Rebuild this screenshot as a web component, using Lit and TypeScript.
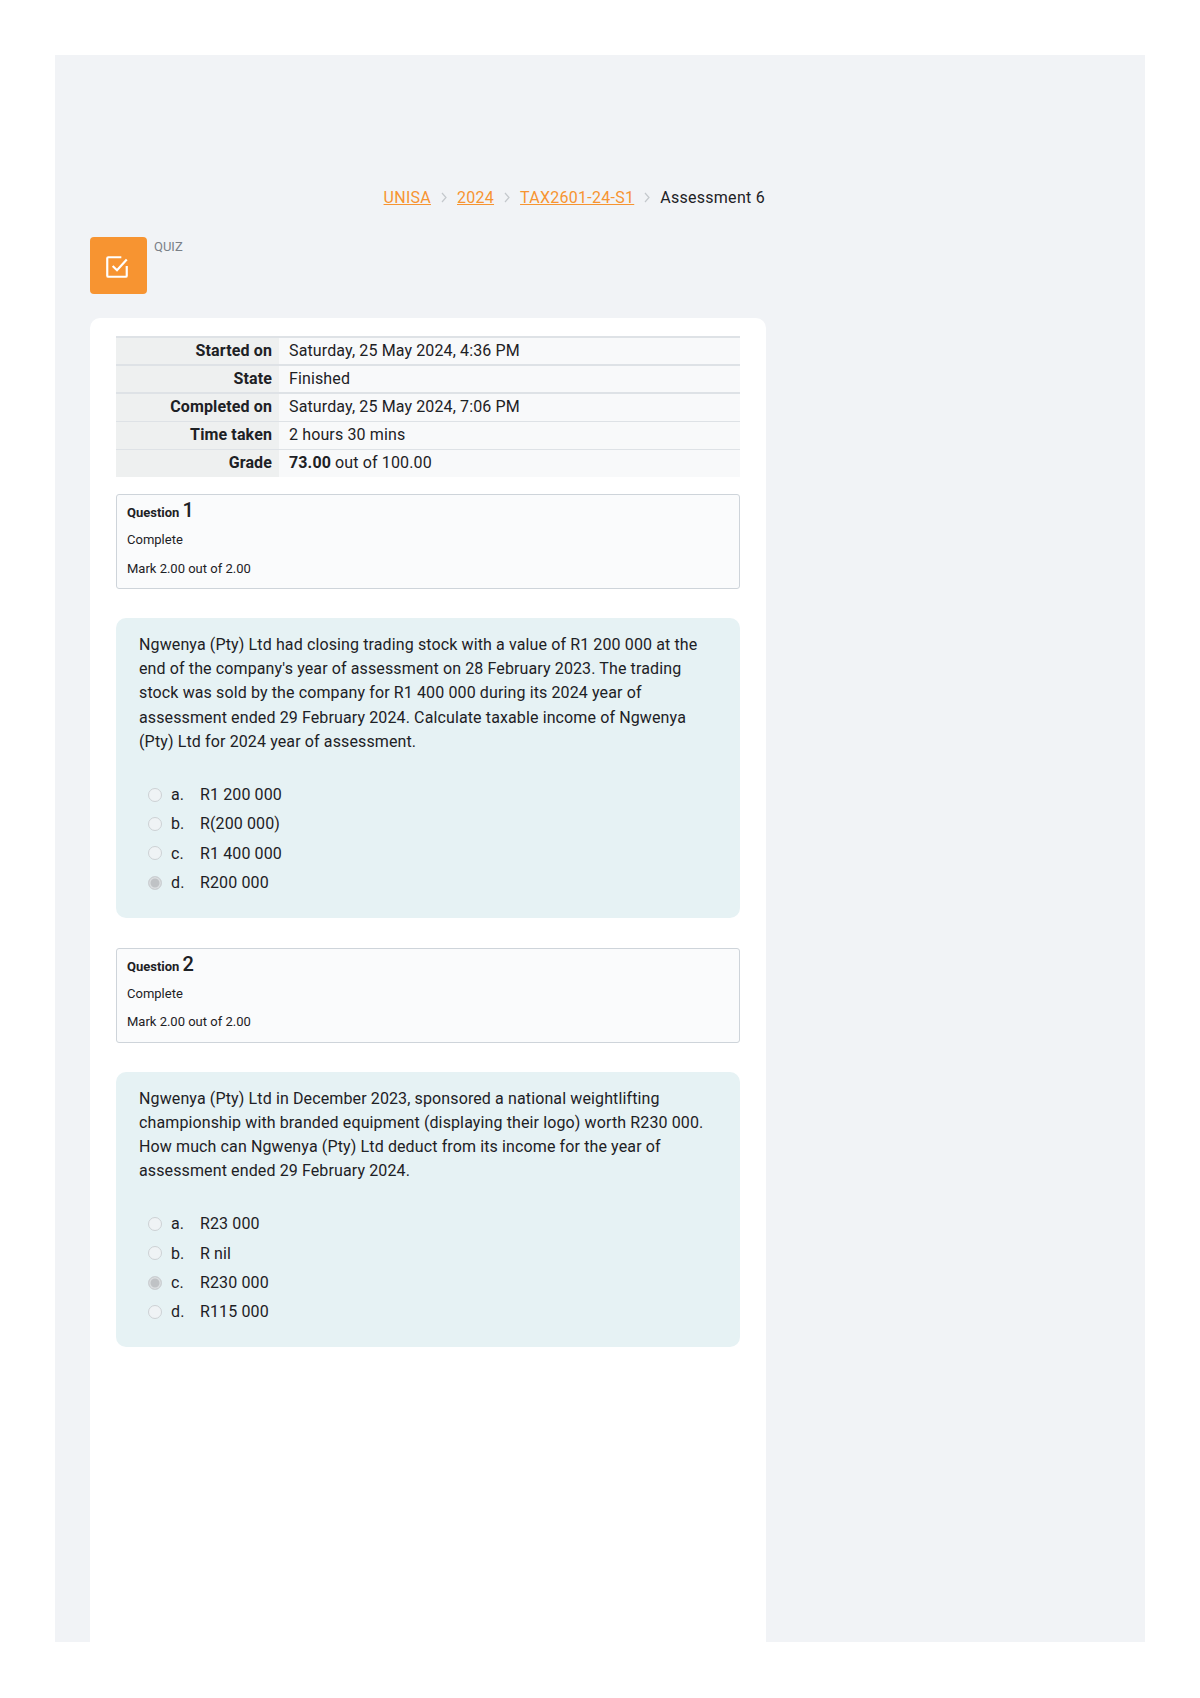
import { LitElement, html, css } from "lit";
import { customElement } from "lit/decorators.js";

type Question = {
  num: number;
  text: string;
  options: { letter: string; label: string; checked?: boolean }[];
};

const SUMMARY = [
  { label: "Started on", value: html`Saturday, 25 May 2024, 4:36 PM` },
  { label: "State", value: html`Finished` },
  { label: "Completed on", value: html`Saturday, 25 May 2024, 7:06 PM` },
  { label: "Time taken", value: html`2 hours 30 mins` },
  { label: "Grade", value: html`<b>73.00</b> out of 100.00` },
];

const QUESTIONS: Question[] = [
  {
    num: 1,
    text: "Ngwenya (Pty) Ltd had closing trading stock with a value of R1 200 000 at the end of the company's year of assessment on 28 February 2023. The trading stock was sold by the company for R1 400 000 during its 2024 year of assessment ended 29 February 2024. Calculate taxable income of Ngwenya (Pty) Ltd for 2024 year of assessment.",
    options: [
      { letter: "a.", label: "R1 200 000" },
      { letter: "b.", label: "R(200 000)" },
      { letter: "c.", label: "R1 400 000" },
      { letter: "d.", label: "R200 000", checked: true },
    ],
  },
  {
    num: 2,
    text: "Ngwenya (Pty) Ltd in December 2023, sponsored a national weightlifting championship with branded equipment (displaying their logo) worth R230 000. How much can Ngwenya (Pty) Ltd deduct from its income for the year of assessment ended 29 February 2024.",
    options: [
      { letter: "a.", label: "R23 000" },
      { letter: "b.", label: "R nil" },
      { letter: "c.", label: "R230 000", checked: true },
      { letter: "d.", label: "R115 000" },
    ],
  },
];

@customElement("app-root")
class AppRoot extends LitElement {
  static styles = css`
    :host {
      display: block;
      background: #fff;
      padding: 55px;
      font-family: Roboto, "Liberation Sans", sans-serif;
      color: #1d2125;
      font-size: 16px;
    }
    .panel {
      background: #f1f3f6;
      height: 1587px;
      padding: 0 35px;
      display: flex;
      flex-direction: column;
      box-sizing: border-box;
      overflow: hidden;
    }
    .crumbs {
      width: 675px;
      margin-top: 132px;
      height: 20px;
      display: flex;
      justify-content: flex-end;
      align-items: center;
      gap: 9px;
      letter-spacing: 0.27px;
    }
    .crumbs a {
      color: #f79431;
      text-decoration: underline;
    }
    .crumbs svg {
      width: 8px;
      height: 11px;
      fill: none;
      stroke: #c4c8cc;
      stroke-width: 1.2;
    }
    .head {
      display: flex;
      gap: 7px;
      margin-top: 30px;
    }
    .logo {
      width: 57px;
      height: 57px;
      border-radius: 4px;
      background: #f79431;
      display: flex;
      align-items: center;
      justify-content: center;
    }
    .logo svg {
      width: 26px;
      height: 26px;
      fill: none;
      stroke: #fff;
      stroke-width: 2;
      margin: 3px 3px 0 0;
    }
    .kind {
      font-size: 13px;
      color: #7a8087;
      margin-top: 2px;
    }
    .card {
      margin-top: 24px;
      flex: 1;
      width: 676px;
      background: #fff;
      border-radius: 10px 10px 0 0;
      padding: 18px 26px 0 26px;
      box-sizing: border-box;
    }
    table {
      width: 100%;
      border-collapse: collapse;
      letter-spacing: 0.13px;
    }
    tr {
      height: 28px;
    }
    tr:nth-child(-n + 3) th,
    tr:nth-child(-n + 3) td {
      border-top: 2px solid #dee2e6;
    }
    th,
    td {
      border-top: 1px solid #dee2e6;
      padding: 0 7px 1px;
      box-sizing: border-box;
    }
    th {
      width: 163px;
      text-align: right;
      background: #eef0f0;
      font-weight: 700;
    }
    td {
      background: #f8f9fa;
      padding-left: 10px;
    }
    .info {
      margin-top: 17px;
      height: 95px;
      box-sizing: border-box;
      border: 1.5px solid #ced4da;
      border-radius: 3px;
      background: #fafbfc;
      padding: 3px 10px;
      font-size: 13px;
    }
    .info .no {
      height: 28px;
      display: flex;
      align-items: baseline;
      gap: 3px;
      font-weight: 700;
      font-size: 13px;
    }
    .info .no span {
      font-size: 20px;
      font-weight: 500;
    }
    .info p {
      margin: 0;
      height: 28.5px;
      line-height: 28.5px;
    }
    .body {
      margin-top: 29px;
      margin-bottom: 29.8px;
      background: #e6f2f4;
      border-radius: 10px;
      padding: 15px 23px 20.5px;
      letter-spacing: 0.12px;
    }
    .text {
      margin: 0 0 26px;
      line-height: 24.2px;
    }
    .opt {
      display: flex;
      align-items: center;
      height: 29.3px;
      padding-left: 9px;
    }
    .radio {
      width: 14px;
      height: 14px;
      border-radius: 50%;
      background: #eff3f5;
      border: 1.5px solid #cdd1d4;
      box-sizing: border-box;
      margin-right: 9px;
    }
    .radio.on {
      background: #bfc2c5;
      box-shadow: inset 0 0 0 1.5px #dcdfe1;
    }
    .letter {
      width: 29px;
    }
  `;

  private renderQuestion(q: Question) {
    return html`
      <div class="info">
        <div class="no">Question <span>${q.num}</span></div>
        <p>Complete</p>
        <p>Mark 2.00 out of 2.00</p>
      </div>
      <div class="body">
        <p class="text">${q.text}</p>
        ${q.options.map(
          (o) => html`
            <div class="opt">
              <span class="radio ${o.checked ? "on" : ""}"></span>
              <span class="letter">${o.letter}</span>
              <span>${o.label}</span>
            </div>
          `,
        )}
      </div>
    `;
  }

  render() {
    const chevron = html`<svg viewBox="0 0 8 11"><path d="M2 1l4 4.5L2 10" /></svg>`;
    return html`
      <div class="panel">
        <nav class="crumbs">
          <a>UNISA</a>${chevron}<a>2024</a>${chevron}<a>TAX2601-24-S1</a>${chevron}<span>Assessment 6</span>
        </nav>
        <div class="head">
          <div class="logo">
            <svg viewBox="0 0 24 24">
              <path d="M21 11v9a1 1 0 0 1-1 1H4a1 1 0 0 1-1-1V4a1 1 0 0 1 1-1h12" />
              <path d="M8 11l4 4 9-10" />
            </svg>
          </div>
          <div class="kind">QUIZ</div>
        </div>
        <div class="card">
          <table>
            ${SUMMARY.map((r) => html`<tr><th>${r.label}</th><td>${r.value}</td></tr>`)}
          </table>
          ${QUESTIONS.map((q) => this.renderQuestion(q))}
        </div>
      </div>
    `;
  }
}

declare global {
  interface HTMLElementTagNameMap {
    "app-root": AppRoot;
  }
}
